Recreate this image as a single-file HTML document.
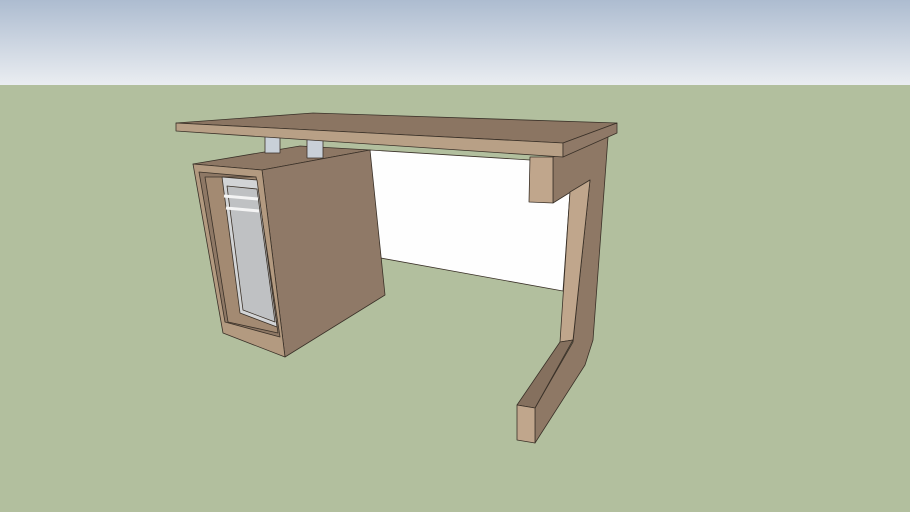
<!DOCTYPE html>
<html><head><style>html,body{margin:0;padding:0;width:910px;height:512px;overflow:hidden}</style></head>
<body>
<svg width="910" height="512" viewBox="0 0 910 512" xmlns="http://www.w3.org/2000/svg">
<defs>
<linearGradient id="sky" x1="0" y1="0" x2="0" y2="1"><stop offset="0" stop-color="#adbcd0"/><stop offset="1" stop-color="#eaedf1"/></linearGradient>
</defs>
<rect width="910" height="85" fill="url(#sky)"/>
<rect y="85" width="910" height="427" fill="#b2bf9e"/>
<g stroke="#3a3128" stroke-width="0.8" stroke-linejoin="round">
<polygon points="370,150 530,160 530,200 570,192 563,291 375,257" fill="#fefefe"/>
<!-- cabinet top (thin) -->
<polygon points="193,164 262,170 370,150 300,146" fill="#8d7764"/>
<!-- cylinders -->
<rect x="265" y="136" width="15" height="17" fill="#c9d0d8"/>
<rect x="307" y="139" width="16" height="19" fill="#c9d0d8"/>
<!-- cabinet side -->
<polygon points="262,170 370,150 385,295 285,357" fill="#8f7967"/>
<!-- cabinet front frame -->
<polygon points="193,164 262,170 285,357 223,333" fill="#b39a80"/>
<polygon points="199,172 256,177 280,337 225,322" fill="#8e7865"/>
<polygon points="205,177 256,177 278,333 228,322" fill="#a38a72"/>
<!-- mac pro -->
<polygon points="222,177 257,180 277,327 240,313" fill="#d2d4d6"/>
<polygon points="227,186 257,189 275,322 243,310" fill="#bfc1c3"/>
<line x1="224" y1="196" x2="258" y2="199" stroke="#f4f4f4" stroke-width="3"/>
<line x1="226" y1="208" x2="259" y2="211" stroke="#f4f4f4" stroke-width="3"/>
<!-- right leg -->
<polygon points="553,157 608,137 593,340 585,365 535,443 535,408 573,342 590,180 553,203" fill="#8e7865"/>
<polygon points="570,192 590,180 573,340 560,342" fill="#c0a68c"/>
<polygon points="560,342 573,340 535,408 517,405" fill="#85705e"/>
<polygon points="517,405 535,408 535,443 517,440" fill="#c0a68c"/>
<polygon points="530,157 553,157 553,203 529,202" fill="#c0a68c"/>
<!-- tabletop -->
<polygon points="176,123 313,113 617,123 563,143" fill="#8b7562"/>
<polygon points="176,123 563,143 563,157 176,131" fill="#b8a086"/>
<polygon points="563,143 617,123 617,133 563,157" fill="#8f7967"/>
</g>
</svg>
</body></html>
